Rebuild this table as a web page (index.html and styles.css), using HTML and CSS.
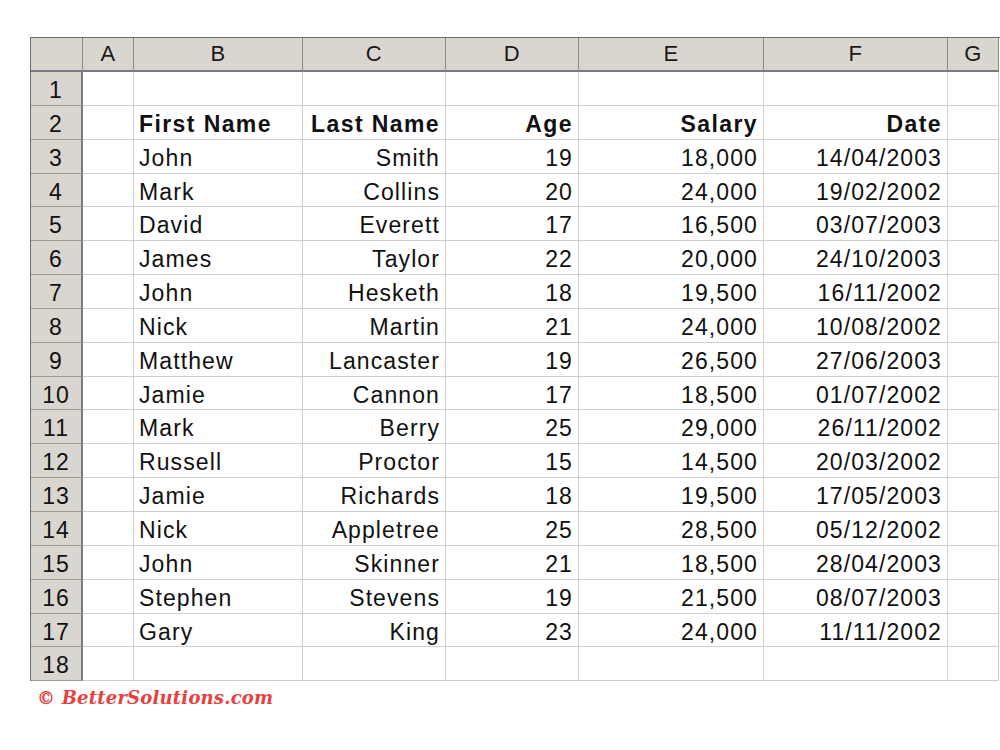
FILE: index.html
```html
<!DOCTYPE html>
<html>
<head>
<meta charset="utf-8">
<link rel="stylesheet" href="styles.css">
</head>
<body>
<div class="sheet">
  <div class="corner"></div>
  <div class="colh">A</div><div class="colh">B</div><div class="colh">C</div><div class="colh">D</div><div class="colh">E</div><div class="colh">F</div><div class="colh">G</div>

  <div class="rowh">1</div><div class="c"></div><div class="c"></div><div class="c"></div><div class="c"></div><div class="c"></div><div class="c"></div><div class="c"></div>

  <div class="rowh">2</div><div class="c"></div><div class="c l b">First Name</div><div class="c r b">Last Name</div><div class="c r b">Age</div><div class="c r b">Salary</div><div class="c r b">Date</div><div class="c"></div>

  <div class="rowh">3</div><div class="c"></div><div class="c l">John</div><div class="c r">Smith</div><div class="c r">19</div><div class="c r">18,000</div><div class="c r">14/04/2003</div><div class="c"></div>
  <div class="rowh">4</div><div class="c"></div><div class="c l">Mark</div><div class="c r">Collins</div><div class="c r">20</div><div class="c r">24,000</div><div class="c r">19/02/2002</div><div class="c"></div>
  <div class="rowh">5</div><div class="c"></div><div class="c l">David</div><div class="c r">Everett</div><div class="c r">17</div><div class="c r">16,500</div><div class="c r">03/07/2003</div><div class="c"></div>
  <div class="rowh">6</div><div class="c"></div><div class="c l">James</div><div class="c r">Taylor</div><div class="c r">22</div><div class="c r">20,000</div><div class="c r">24/10/2003</div><div class="c"></div>
  <div class="rowh">7</div><div class="c"></div><div class="c l">John</div><div class="c r">Hesketh</div><div class="c r">18</div><div class="c r">19,500</div><div class="c r">16/11/2002</div><div class="c"></div>
  <div class="rowh">8</div><div class="c"></div><div class="c l">Nick</div><div class="c r">Martin</div><div class="c r">21</div><div class="c r">24,000</div><div class="c r">10/08/2002</div><div class="c"></div>
  <div class="rowh">9</div><div class="c"></div><div class="c l">Matthew</div><div class="c r">Lancaster</div><div class="c r">19</div><div class="c r">26,500</div><div class="c r">27/06/2003</div><div class="c"></div>
  <div class="rowh">10</div><div class="c"></div><div class="c l">Jamie</div><div class="c r">Cannon</div><div class="c r">17</div><div class="c r">18,500</div><div class="c r">01/07/2002</div><div class="c"></div>
  <div class="rowh">11</div><div class="c"></div><div class="c l">Mark</div><div class="c r">Berry</div><div class="c r">25</div><div class="c r">29,000</div><div class="c r">26/11/2002</div><div class="c"></div>
  <div class="rowh">12</div><div class="c"></div><div class="c l">Russell</div><div class="c r">Proctor</div><div class="c r">15</div><div class="c r">14,500</div><div class="c r">20/03/2002</div><div class="c"></div>
  <div class="rowh">13</div><div class="c"></div><div class="c l">Jamie</div><div class="c r">Richards</div><div class="c r">18</div><div class="c r">19,500</div><div class="c r">17/05/2003</div><div class="c"></div>
  <div class="rowh">14</div><div class="c"></div><div class="c l">Nick</div><div class="c r">Appletree</div><div class="c r">25</div><div class="c r">28,500</div><div class="c r">05/12/2002</div><div class="c"></div>
  <div class="rowh">15</div><div class="c"></div><div class="c l">John</div><div class="c r">Skinner</div><div class="c r">21</div><div class="c r">18,500</div><div class="c r">28/04/2003</div><div class="c"></div>
  <div class="rowh">16</div><div class="c"></div><div class="c l">Stephen</div><div class="c r">Stevens</div><div class="c r">19</div><div class="c r">21,500</div><div class="c r">08/07/2003</div><div class="c"></div>
  <div class="rowh">17</div><div class="c"></div><div class="c l">Gary</div><div class="c r">King</div><div class="c r">23</div><div class="c r">24,000</div><div class="c r">11/11/2002</div><div class="c"></div>
  <div class="rowh">18</div><div class="c"></div><div class="c"></div><div class="c"></div><div class="c"></div><div class="c"></div><div class="c"></div><div class="c"></div>
</div>
<div class="credit">© BetterSolutions.com</div>
</body>
</html>
```

FILE: styles.css
```css
html, body {
  margin: 0;
  padding: 0;
  background: #ffffff;
}

body {
  font-family: "Liberation Sans", Arial, sans-serif;
  color: #111111;
}

.sheet {
  display: grid;
  grid-template-columns: 52px 51px 169px 143px 133px 185px 184px 51px;
  grid-template-rows: 34px repeat(18, 33.85px);
  width: 969px;
  margin: 37px 0 0 30px;
  border-top: 1px solid #6e6e6e;
  border-left: 1px solid #6e6e6e;
}

.sheet > div {
  box-sizing: border-box;
  white-space: nowrap;
  overflow: hidden;
}

.corner,
.colh {
  background: #d9d6d0;
  border-right: 1px solid #8a8a8a;
  border-bottom: 2px solid #7a7a7a;
}

.colh {
  font-size: 22px;
  line-height: 32px;
  text-align: center;
  color: #1a1a1a;
  letter-spacing: 0.5px;
}

.rowh {
  background: #d9d6d0;
  border-right: 2px solid #7a7a7a;
  border-bottom: 1px solid #9a9a9a;
  font-size: 23px;
  line-height: 30px;
  padding-top: 3px;
  text-align: center;
  letter-spacing: 1px;
}

.c {
  border-right: 1px solid #cfcfcf;
  border-bottom: 1px solid #cfcfcf;
  font-size: 23px;
  line-height: 30px;
  padding-top: 3px;
  letter-spacing: 1.1px;
}

.l {
  text-align: left;
  padding-left: 5px;
}

.r {
  text-align: right;
  padding-right: 5px;
}

.b {
  font-weight: bold;
  letter-spacing: 1.4px;
}

.credit {
  margin: 6px 0 0 37px;
  font-family: "DejaVu Serif", "Liberation Serif", serif;
  font-style: italic;
  font-weight: bold;
  font-size: 18px;
  color: #e8403e;
  letter-spacing: 0.2px;
}
```
